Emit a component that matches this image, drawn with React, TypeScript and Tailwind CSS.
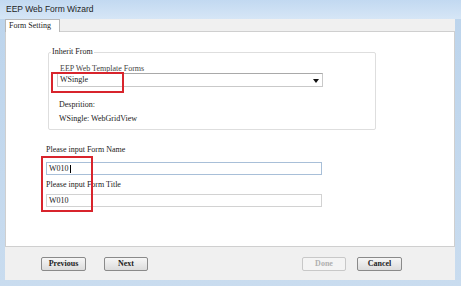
import React from 'react';

const mono = { fontFamily: '"Liberation Serif", "Noto Sans CJK SC", serif' };

const Btn = ({ label, disabled = false, className = '' }: { label: string; disabled?: boolean; className?: string }) => (
  <button
    className={`h-[14px] rounded-[2px] border text-[8px] font-semibold leading-none ${disabled ? 'border-[#c8c8c8] bg-[#f4f4f4] text-[#b0b0b0]' : 'border-[#8a8a8a] bg-gradient-to-b from-[#f6f6f6] to-[#dcdcdc] text-[#222]'} ${className}`}
    style={mono}
  >
    {label}
  </button>
);

const txt = 'text-[8px] font-medium text-[#1a1a1a]';

export default function App() {
  return (
    <div className="relative flex h-[286px] w-[461px] flex-col overflow-hidden bg-gradient-to-b from-[#bcd4ec] to-[#c9dcef]">
      <div className="flex h-[19px] items-center bg-gradient-to-b from-[#c2d9f1] to-[#d6e6f6] px-[6px] text-[8.5px] text-[#1e1e1e]" style={{ fontFamily: '"Liberation Sans", sans-serif' }}>
        EEP Web Form Wizard
      </div>
      <div className="ml-[5px] mr-[6px] mb-[6px] flex flex-1 flex-col bg-[#f0f0f0]">
        <div className="flex h-[13px] items-end border-b border-[#cfcfcf]">
          <div className={`-mb-px flex h-[13px] w-[55px] items-center border border-b-0 border-[#b8b8b8] bg-white pl-[3px] ${txt}`} style={mono}>
            Form Setting
          </div>
        </div>
        <div className="relative h-[215px] border-x border-b border-[#cfcfcf] bg-white">
          <div className="relative ml-[42px] mt-[20px] h-[78px] w-[328px] rounded-[2px] border border-[#dedede] pl-[10px] pt-[11px]">
            <span className={`absolute -top-[6px] left-[2px] bg-white px-px leading-[10px] ${txt}`} style={mono}>Inherit From</span>
            <div className="pl-px text-[8px] leading-[9px] text-[#444]" style={mono}>EEP Web Template Forms</div>
            <div className={`relative -ml-[2px] flex h-[14px] w-[266px] items-center border border-[#c9c9c9] border-t-[#a9a9a9] bg-white pl-[2px] ${txt}`} style={mono}>
              WSingle
              <svg className="absolute right-[3px] top-[5px]" width="6" height="4" viewBox="0 0 6 4">
                <path d="M0 0h6L3 4z" fill="#111" />
              </svg>
            </div>
            <div className={`mt-[13px] leading-[10px] ${txt}`} style={mono}>Desprition:</div>
            <div className={`mt-[4px] leading-[10px] ${txt}`} style={mono}>WSingle: WebGridView</div>
          </div>
          <div className="ml-[40px]">
            <div className={`mt-[15px] leading-[10px] ${txt}`} style={mono}>Please input Form Name</div>
            <div className={`mt-[7px] flex h-[13px] w-[276px] items-center border border-[#a8bfd8] bg-white pl-[2px] ${txt}`} style={mono}>
              W010<span className="ml-px h-[8px] w-px bg-black" />
            </div>
            <div className={`mt-[5px] leading-[10px] ${txt}`} style={mono}>Please input Form Title</div>
            <div className={`mt-[4px] flex h-[13px] w-[276px] items-center border border-[#d2d2d2] bg-white pl-[2px] ${txt}`} style={mono}>
              W010
            </div>
          </div>
          <div className="absolute left-[45px] top-[40px] h-[21px] w-[73px] border-2 border-[#d8242c]" />
          <div className="absolute left-[35px] top-[124px] h-[56px] w-[52px] border-2 border-[#d8242c]" />
        </div>
        <div className="flex flex-1 items-start pt-[10px]">
          <Btn label="Previous" className="ml-[36px] w-[45px]" />
          <Btn label="Next" className="ml-[18px] w-[44px]" />
          <Btn label="Done" disabled className="ml-auto w-[44px]" />
          <Btn label="Cancel" className="ml-[11px] mr-[53px] w-[45px]" />
        </div>
      </div>
    </div>
  );
}
